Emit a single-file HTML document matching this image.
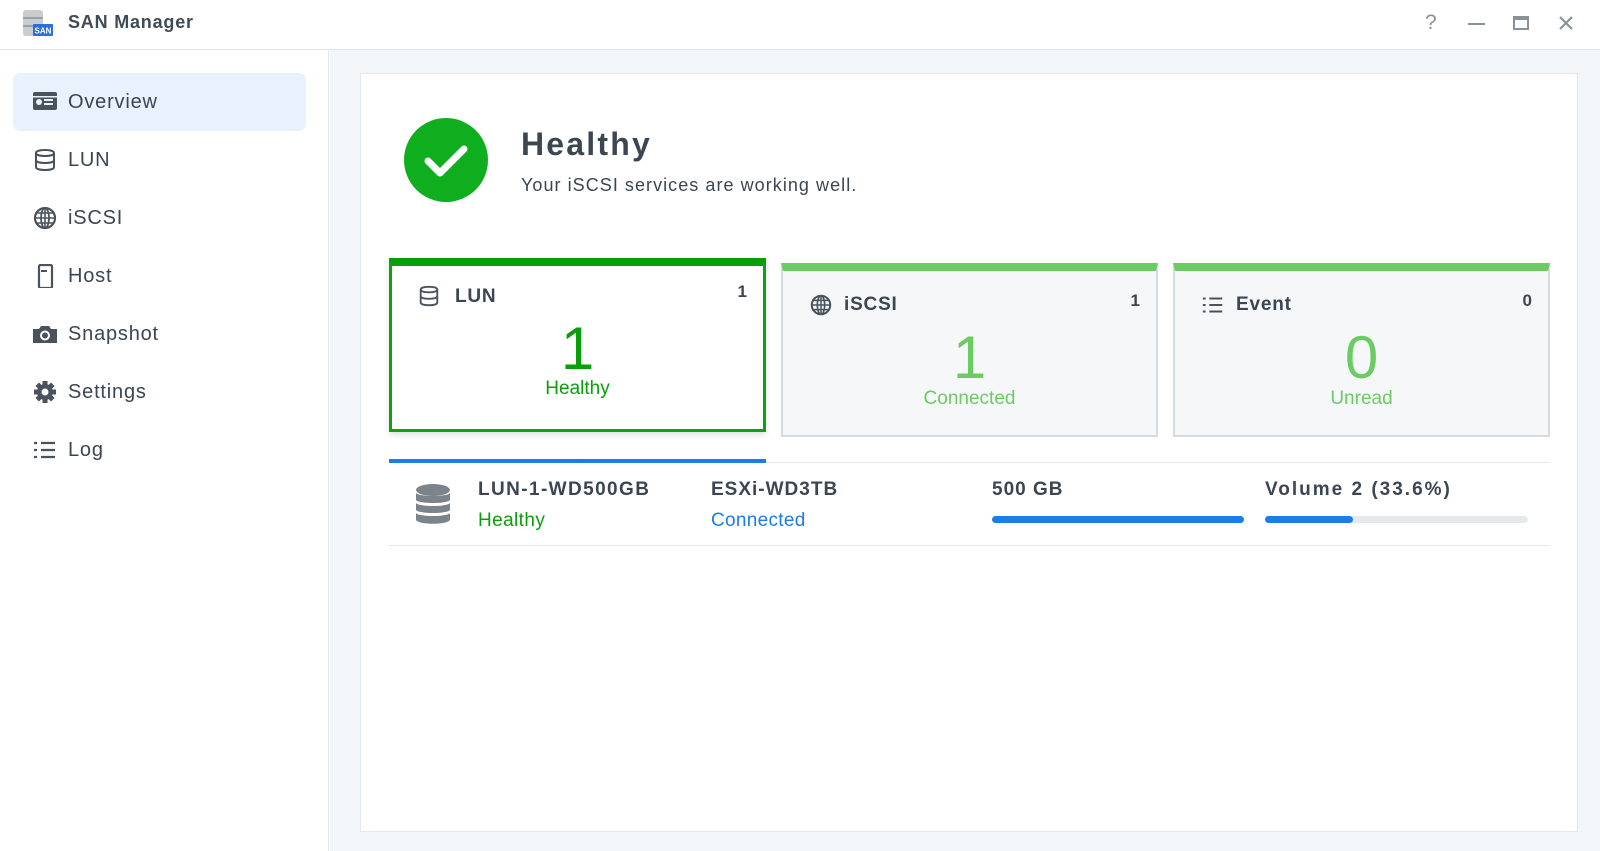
<!DOCTYPE html>
<html><head><meta charset="utf-8"><style>
*{box-sizing:border-box;margin:0;padding:0}
body{width:1600px;height:851px;overflow:hidden;font-family:"Liberation Sans",sans-serif;background:#fff;color:#3b4652;position:relative}
.abs{position:absolute}
.hdr{left:0;top:0;width:1600px;height:50px;border-bottom:1px solid #dfe5ec;background:#fff}
.side{left:0;top:50px;width:329px;height:801px;background:#fff;border-right:1px solid #e3e8ee}
.main{left:330px;top:50px;width:1270px;height:801px;background:#f3f6f9}
.panel{left:360px;top:73px;width:1218px;height:759px;background:#fff;border:1px solid #e3e8ee}
.nav{position:absolute;left:13px;width:293px;height:58px;border-radius:7px;font-size:20px;line-height:58px;padding-left:55px;color:#3b4652;letter-spacing:0.8px}
.nav svg{position:absolute;left:19px;top:17px}
.card{position:absolute;background:#f5f7f9;border:2px solid #d6dbe0;border-top:8px solid #6ccb62}
.card .lbl{position:absolute;left:61px;top:23px;font-size:19px;font-weight:bold;letter-spacing:0.8px}
.card .cnt{position:absolute;right:16px;top:20px;font-size:17px;font-weight:bold}
.card .big{position:absolute;left:0;right:0;text-align:center;top:52px;font-size:60px;color:#6ccb62}
.card .st{position:absolute;left:0;right:0;text-align:center;top:117px;font-size:19px;color:#6ccb62}
.card svg{position:absolute;left:26px;top:22px}
.b{letter-spacing:1.3px}
</style></head><body>
<div class="abs hdr">
<svg class="abs" style="left:20px;top:8px" width="34" height="32" viewBox="0 0 34 32">
<rect x="3" y="2" width="20" height="26" rx="3" fill="#c9ccd0"/><rect x="3" y="9" width="20" height="2" fill="#9aa0a6"/><rect x="3" y="17" width="20" height="2" fill="#9aa0a6"/>
<rect x="13" y="16" width="20" height="12" rx="1" fill="#2a6fe0"/><text x="23" y="25.5" font-size="8" fill="#fff" text-anchor="middle" font-family="Liberation Sans" font-weight="bold">SAN</text></svg>
<div class="abs" style="left:68px;top:12px;font-size:18px;font-weight:bold;color:#414b55;letter-spacing:0.8px">SAN Manager</div>
<div class="abs" style="left:1425px;top:11px;font-size:21px;color:#8a9299">?</div>
<div class="abs" style="left:1468px;top:23px;width:17px;height:2px;background:#8a9299"></div>
<div class="abs" style="left:1513px;top:16px;width:16px;height:14px;border:2px solid #8a9299;border-top-width:4px"></div>
<svg class="abs" style="left:1558px;top:15px" width="16" height="16"><path d="M2 2L14 14M14 2L2 14" stroke="#8a9299" stroke-width="2.2"/></svg>
</div>
<div class="abs side">
<div class="nav" style="top:23px;background:#e8f1fc"><svg width="26" height="22" viewBox="0 0 26 22"><rect x="1" y="2" width="24" height="18" rx="2" fill="#4a535c"/><circle cx="7" cy="12" r="3" fill="#e8f1fc"/><rect x="12" y="9" width="9" height="2" fill="#e8f1fc"/><rect x="12" y="13" width="9" height="2" fill="#e8f1fc"/><rect x="1" y="6" width="24" height="1.5" fill="#e8f1fc"/></svg>Overview</div>
<div class="nav" style="top:81px"><svg width="26" height="24" viewBox="0 0 26 24"><path d="M4 5v14c0 2 4 3 9 3s9-1 9-3V5c0-2-4-3-9-3S4 3 4 5zm0 0c0 2 4 3 9 3s9-1 9-3M4 12c0 2 4 3 9 3s9-1 9-3" fill="none" stroke="#4a535c" stroke-width="2"/></svg>LUN</div>
<div class="nav" style="top:139px"><svg width="26" height="24" viewBox="0 0 26 24"><circle cx="13" cy="12" r="10" fill="none" stroke="#4a535c" stroke-width="2.2"/><ellipse cx="13" cy="12" rx="4" ry="10" fill="none" stroke="#4a535c" stroke-width="1.8"/><path d="M3 12h20M13 2v20M5 7h16M5 17h16" stroke="#4a535c" stroke-width="1.6"/></svg>iSCSI</div>
<div class="nav" style="top:197px"><svg width="26" height="24" viewBox="0 0 26 24"><rect x="7" y="1" width="13" height="23" rx="1.5" fill="none" stroke="#4a535c" stroke-width="2.2"/><path d="M9 7h6" stroke="#4a535c" stroke-width="2"/></svg>Host</div>
<div class="nav" style="top:255px"><svg width="26" height="24" viewBox="0 0 26 24"><path d="M1 7h6l2-3h8l2 3h6v14H1z" fill="#4a535c"/><circle cx="13" cy="13.5" r="5" fill="#fff"/><circle cx="13" cy="13.5" r="3" fill="#4a535c"/></svg>Snapshot</div>
<div class="nav" style="top:313px"><svg width="26" height="24" viewBox="0 0 26 24"><g transform="translate(13 12)" fill="#4a535c"><circle r="8"/><rect x="-2.5" y="-11" width="5" height="22"/><rect x="-2.5" y="-11" width="5" height="22" transform="rotate(45)"/><rect x="-2.5" y="-11" width="5" height="22" transform="rotate(90)"/><rect x="-2.5" y="-11" width="5" height="22" transform="rotate(135)"/><circle r="3.5" fill="#fff"/></g></svg>Settings</div>
<div class="nav" style="top:371px"><svg width="26" height="24" viewBox="0 0 26 24"><path d="M2 5h3M9 5h14M2 12h3M9 12h14M2 19h3M9 19h14" stroke="#4a535c" stroke-width="2.2"/></svg>Log</div>
</div>
<div class="abs main"></div>
<div class="abs panel"></div>
<svg class="abs" style="left:404px;top:118px" width="84" height="84"><circle cx="42" cy="42" r="42" fill="#0fae1f"/><path d="M24 43l12 12 24-24" fill="none" stroke="#fff" stroke-width="7" stroke-linecap="round" stroke-linejoin="round"/></svg>
<div class="abs" style="left:521px;top:126px;font-size:32px;font-weight:bold;color:#3b4652;letter-spacing:2.2px">Healthy</div>
<div class="abs" style="left:521px;top:175px;font-size:18px;color:#3b4652;letter-spacing:1.05px">Your iSCSI services are working well.</div>

<div class="card" style="left:389px;top:258px;width:377px;height:174px;background:#fff;border:3px solid #0ea30e;border-top:8px solid #0a9e0a;box-shadow:0 3px 6px rgba(0,0,0,.12)">
<svg width="24" height="24" viewBox="0 0 26 24" style="left:25px;top:18px"><path d="M4 5v14c0 2 4 3 9 3s9-1 9-3V5c0-2-4-3-9-3S4 3 4 5zm0 0c0 2 4 3 9 3s9-1 9-3M4 12c0 2 4 3 9 3s9-1 9-3" fill="none" stroke="#4a535c" stroke-width="2"/></svg>
<div class="lbl" style="left:63px;top:20px">LUN</div><div class="cnt" style="top:16px">1</div>
<div class="big" style="color:#0a9e0a;top:48px">1</div><div class="st" style="color:#0a9e0a;top:112px">Healthy</div></div>

<div class="card" style="left:781px;top:263px;width:377px;height:174px">
<svg width="24" height="24" viewBox="0 0 26 24"><circle cx="13" cy="12" r="10" fill="none" stroke="#4a535c" stroke-width="2.2"/><ellipse cx="13" cy="12" rx="4" ry="10" fill="none" stroke="#4a535c" stroke-width="1.8"/><path d="M3 12h20M13 2v20M5 7h16M5 17h16" stroke="#4a535c" stroke-width="1.6"/></svg>
<div class="lbl">iSCSI</div><div class="cnt">1</div>
<div class="big">1</div><div class="st">Connected</div></div>

<div class="card" style="left:1173px;top:263px;width:377px;height:174px">
<svg width="24" height="24" viewBox="0 0 26 24"><path d="M2 5h3M9 5h14M2 12h3M9 12h14M2 19h3M9 19h14" stroke="#4a535c" stroke-width="2.2"/></svg>
<div class="lbl">Event</div><div class="cnt">0</div>
<div class="big">0</div><div class="st">Unread</div></div>

<div class="abs" style="left:389px;top:462px;width:1161px;height:1px;background:#e3e8ee"></div>
<div class="abs" style="left:389px;top:459px;width:377px;height:4px;background:#1a7de8"></div>
<div class="abs" style="left:573px;top:455px;width:0;height:0;border:4px solid transparent;border-bottom-color:#1a7de8"></div>
<svg class="abs" style="left:415px;top:484px" width="36" height="42" viewBox="0 0 36 42"><g fill="#7b838b"><ellipse cx="18" cy="6" rx="17" ry="6"/><path d="M1 9c3 4 31 4 34 0v7c-3 4-31 4-34 0z"/><path d="M1 19c3 4 31 4 34 0v7c-3 4-31 4-34 0z"/><path d="M1 29c3 4 31 4 34 0v7c-3 5-31 5-34 0z"/></g></svg>
<div class="abs b" style="left:478px;top:479px;font-size:19px;font-weight:bold;letter-spacing:1.4px">LUN-1-WD500GB</div>
<div class="abs" style="left:478px;top:510px;font-size:19px;color:#0a9e0a;letter-spacing:0.4px">Healthy</div>
<div class="abs" style="left:711px;top:479px;font-size:19px;font-weight:bold;letter-spacing:1px">ESXi-WD3TB</div>
<div class="abs" style="left:711px;top:510px;font-size:19px;color:#1a7de8;letter-spacing:0.3px">Connected</div>
<div class="abs" style="left:992px;top:479px;font-size:19px;font-weight:bold;letter-spacing:1px">500 GB</div>
<div class="abs" style="left:992px;top:516px;width:252px;height:7px;border-radius:4px;background:#1a7de8"></div>
<div class="abs" style="left:1265px;top:479px;font-size:19px;font-weight:bold;letter-spacing:2px">Volume 2 (33.6%)</div>
<div class="abs" style="left:1265px;top:516px;width:263px;height:7px;border-radius:4px;background:#e6e9ec"></div>
<div class="abs" style="left:1265px;top:516px;width:88px;height:7px;border-radius:4px;background:#1a7de8"></div>
<div class="abs" style="left:389px;top:545px;width:1161px;height:1px;background:#e3e8ee"></div>
</body></html>
